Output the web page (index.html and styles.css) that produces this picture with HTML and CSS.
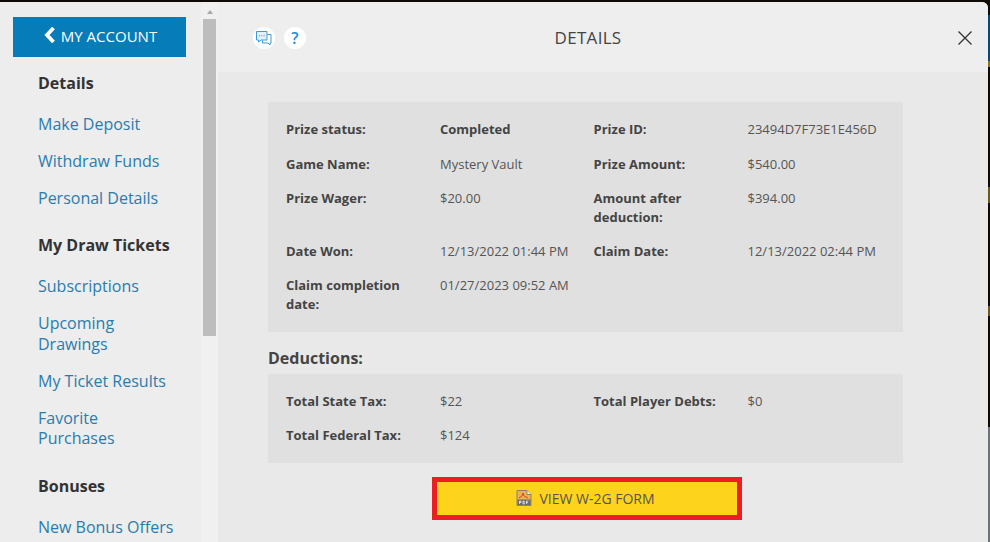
FILE: index.html
```html
<!DOCTYPE html>
<html lang="en">
<head>
<meta charset="utf-8">
<title>Details</title>
<link rel="stylesheet" href="styles.css">
</head>
<body>
<div class="window">
  <aside class="sidebar">
    <a class="account-btn" href="#">
      <svg class="chev" width="12" height="16" viewBox="0 0 12 16"><path d="M9.500 1 L3 8 L9.500 15" fill="none" stroke="#fff" stroke-width="3.800"/></svg>
      <span>MY ACCOUNT</span>
    </a>
    <nav class="menu">
      <h3 class="menu-head first">Details</h3>
      <a class="menu-link" href="#">Make Deposit</a>
      <a class="menu-link" href="#">Withdraw Funds</a>
      <a class="menu-link" href="#">Personal Details</a>
      <h3 class="menu-head">My Draw Tickets</h3>
      <a class="menu-link" href="#">Subscriptions</a>
      <a class="menu-link" href="#">Upcoming Drawings</a>
      <a class="menu-link" href="#">My Ticket Results</a>
      <a class="menu-link" href="#">Favorite Purchases</a>
      <h3 class="menu-head spaced">Bonuses</h3>
      <a class="menu-link" href="#">New Bonus Offers</a>
    </nav>
  </aside>
  <div class="scrollbar">
    <div class="scroll-arrow"></div>
    <div class="scroll-thumb"></div>
  </div>
  <main class="modal">
    <header class="modal-head">
      <div class="head-icons">
        <span class="round-icon">
          <svg width="16" height="16" viewBox="0 0 16 16" fill="none" stroke="#3a9bdc" stroke-width="1"><path d="M.5 1.500h10.500v8.500H5L2.500 12V10H.5z" fill="#e4f1fa"/><path d="M11.500 4.500h3.500v8.500h-1v2L12 13H6.500V10.500"/><path d="M3 5.800h1M5.300 5.800h1M7.600 5.800h1" stroke="#5a7f9c" stroke-width="1.100"/></svg>
        </span>
        <span class="round-icon question">?</span>
      </div>
      <h1 class="modal-title">DETAILS</h1>
      <svg class="close" width="16" height="16" viewBox="0 0 16 16"><path d="M1.500 1.500L14.500 14.500M14.500 1.500L1.500 14.500" stroke="#333" stroke-width="1.300" fill="none"/></svg>
    </header>
    <section class="modal-body">
      <div class="panel grid-main">
        <div class="lbl">Prize status:</div><div class="val strong">Completed</div>
        <div class="lbl">Prize ID:</div><div class="val">23494D7F73E1E456D</div>
        <div class="lbl">Game Name:</div><div class="val">Mystery Vault</div>
        <div class="lbl">Prize Amount:</div><div class="val">$540.00</div>
        <div class="lbl">Prize Wager:</div><div class="val">$20.00</div>
        <div class="lbl">Amount after deduction:</div><div class="val">$394.00</div>
        <div class="lbl">Date Won:</div><div class="val">12/13/2022 01:44 PM</div>
        <div class="lbl">Claim Date:</div><div class="val">12/13/2022 02:44 PM</div>
        <div class="lbl">Claim completion date:</div><div class="val">01/27/2023 09:52 AM</div>
      </div>
      <h2 class="section-title">Deductions:</h2>
      <div class="panel grid-main grid-tax">
        <div class="lbl">Total State Tax:</div><div class="val">$22</div>
        <div class="lbl">Total Player Debts:</div><div class="val">$0</div>
        <div class="lbl">Total Federal Tax:</div><div class="val">$124</div>
      </div>
      <a class="w2g" href="#">
        <svg width="16" height="16" viewBox="0 0 16 16"><path d="M1 .5h10l4 4v11H1z" fill="#e8b54a" stroke="#8a8070"/><path d="M11 .5v4h4" fill="#fff" stroke="#8a8070"/><path d="M3 8 L6 6 L7 3 L8 6 L12 8" fill="none" stroke="#d9342b" stroke-width=".9"/><rect x="1.500" y="9.500" width="13" height="5.500" fill="#6b6b6b"/><path d="M3.500 14v-3h1.500v1.500h-1.500M7 11v3h1.200v-3zM10.500 14v-3h2M10.500 12.500h1.500" fill="none" stroke="#fff" stroke-width=".7"/></svg>
        <span>VIEW W-2G FORM</span>
      </a>
    </section>
  </main>
</div>
</body>
</html>
```
FILE: styles.css
```css
* { box-sizing: border-box; }
html, body { margin: 0; height: 100%; overflow: hidden; }
html { background: #000; }
body {
  font-family: "Open Sans", "Liberation Sans", sans-serif;
  padding: 2px 2px 0 0;
  background: linear-gradient(to bottom,
    #0d0a08 0 15px, #0a4a70 15px 61px, #8f7510 61px 67px,
    #0d0a08 67px 187px, #6d5a14 187px 203px, #0d0a08 203px 306px,
    #6d5a14 306px 316px, #0d0a08 316px 427px, #6f7278 427px 542px);
}
.window {
  display: flex;
  width: 988px;
  height: 540px;
  background: #ededed;
  border-top-right-radius: 6px;
  overflow: hidden;
}
.sidebar { width: 201px; flex: none; padding: 15px 0 0 13px; overflow: hidden; }
.account-btn {
  display: flex;
  align-items: center;
  justify-content: center;
  gap: 5px;
  width: 173px;
  height: 40px;
  padding: 0 0 2px 2px;
  background: #067cb8;
  color: #fff;
  font-size: 15px;
  text-decoration: none;
}
.chev { margin-top: -2px; }
.menu { display: flex; flex-direction: column; width: 138px; margin-left: 25px; }
.menu-head {
  margin: 9.100px 0 20px;
  font-size: 16px;
  line-height: 22px;
  font-weight: 700;
  color: #333;
  white-space: nowrap;
}
.menu-head.first { margin-top: 15px; }
.menu-head.spaced { margin-top: 10px; }
.menu-link {
  font-size: 16px;
  line-height: 20.500px;
  color: #2a7cae;
  text-decoration: none;
  margin-bottom: 16.500px;
}
.scrollbar { width: 17px; flex: none; background: #f0f0f0; padding-left: 2px; }
.scroll-arrow {
  width: 0;
  height: 0;
  margin: 8px auto 5px;
  border-left: 3.500px solid transparent;
  border-right: 3.500px solid transparent;
  border-bottom: 4px solid #a8a8a8;
  transform: translateX(-1px);
}
.scroll-thumb { width: 13px; height: 317px; background: #bdbdbd; }
.modal { flex: 1; display: flex; flex-direction: column; min-width: 0; }
.modal-head {
  flex: none;
  height: 70px;
  display: flex;
  align-items: center;
  justify-content: center;
  position: relative;
  background: #eeeeee;
}
.head-icons { position: absolute; left: 35px; top: 25px; display: flex; gap: 9px; }
.round-icon {
  width: 22px;
  height: 22px;
  border-radius: 50%;
  background: #fff;
  display: flex;
  align-items: center;
  justify-content: center;
}
.question { color: #1e8fd5; font-weight: 600; font-size: 16px; }
.modal-title { margin: 0 30px 0 0; font-size: 17px; font-weight: 400; color: #444; letter-spacing: .3px; }
.close { position: absolute; right: 15px; top: 28px; }
.modal-body { flex: 1; background: #e9e9e9; padding: 30px 85px 0 50px; }
.panel { background: #e0e0e0; }
.grid-main {
  display: grid;
  grid-template-columns: 154px 153.500px 154px 1fr;
  row-gap: 15.200px;
  padding: 18.400px 18px 17.800px;
  font-size: 13px;
  line-height: 19px;
}
.grid-main.grid-tax { row-gap: 15px; padding: 18px; }
.lbl { font-weight: 700; color: #444; padding-right: 20px; }
.val { color: #555; }
.val.strong { font-weight: 700; color: #444; }
.section-title { margin: 15px 0 5px; font-size: 16px; line-height: 22px; font-weight: 700; color: #444; }
.w2g {
  display: flex;
  align-items: center;
  justify-content: center;
  gap: 7px;
  width: 310px;
  height: 43px;
  margin: 14px 0 0 164px;
  padding-right: 3px;
  background: #fed31b;
  border: 5px solid #ee1c25;
  color: #555;
  font-size: 14px;
  text-decoration: none;
}
```
